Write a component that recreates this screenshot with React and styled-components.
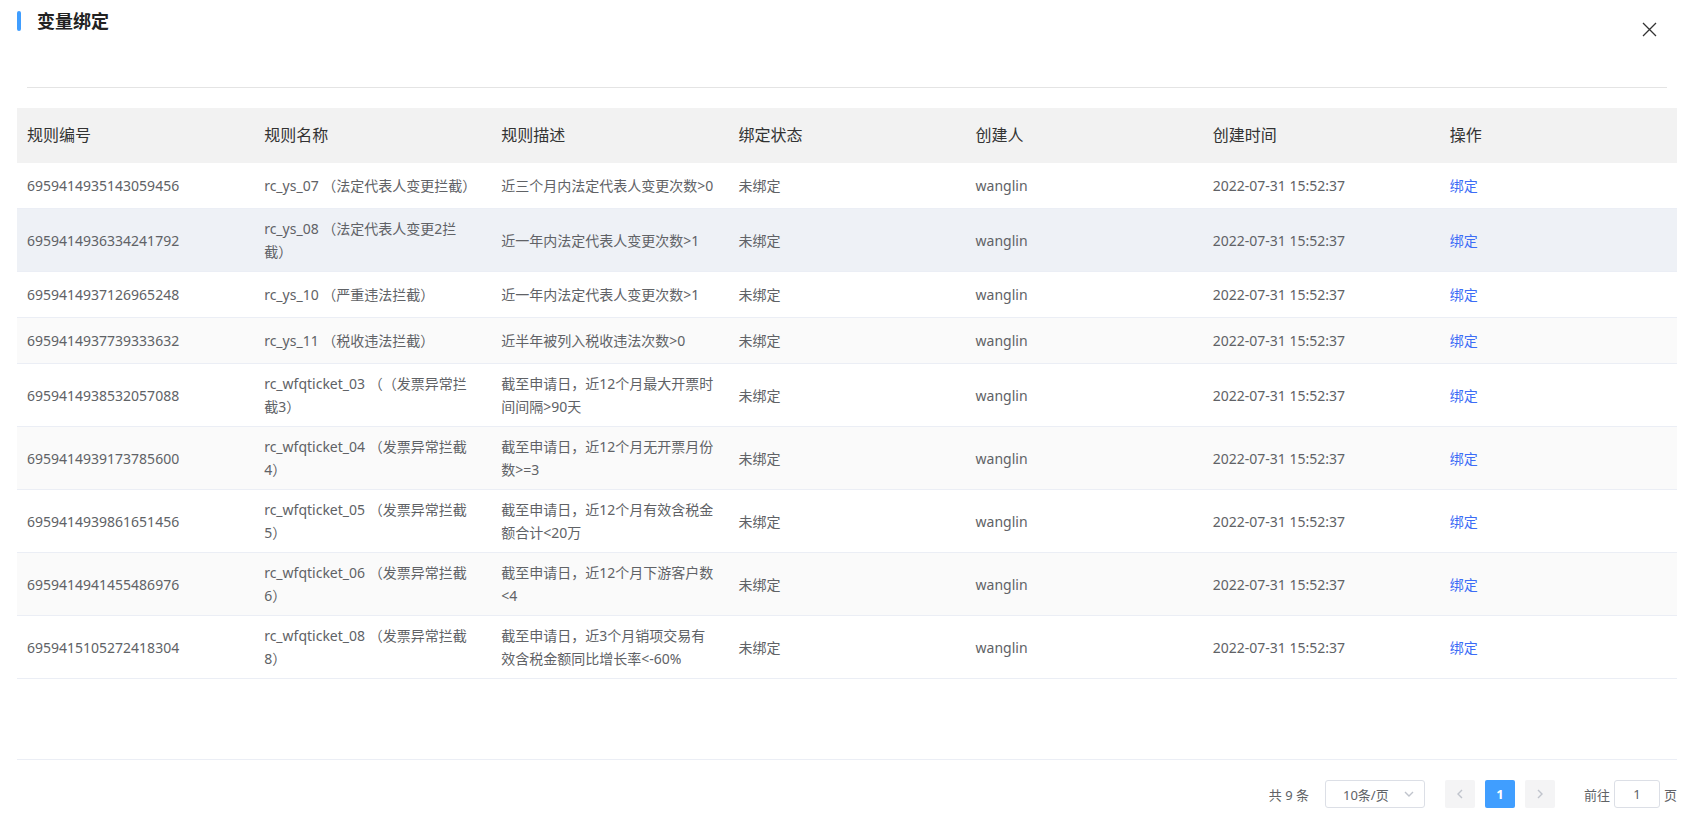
import React from 'react';
import styled, { createGlobalStyle } from 'styled-components';

const GlobalStyle = createGlobalStyle`
  html, body {
    margin: 0;
    padding: 0;
    background: #fff;
  }
  body {
    font-family: "Noto Sans", "Noto Sans CJK SC", sans-serif;
    color: #606266;
    text-spacing-trim: space-all;
  }
`;

const Page = styled.div`
  position: relative;
  height: 820px;
  padding: 11px 19px 0 17px;
  box-sizing: border-box;
  overflow: hidden;
`;

const Title = styled.h2`
  margin: 0;
  height: 20px;
  display: flex;
  align-items: center;
  gap: 16px;
  font-size: 18px;
  line-height: 20px;
  font-weight: 700;
  color: #222;

  &::before {
    content: '';
    width: 4px;
    height: 20px;
    border-radius: 2px;
    background: #409eff;
  }
`;

const CloseButton = styled.button`
  position: absolute;
  top: 21px;
  right: 38px;
  width: 17px;
  height: 17px;
  padding: 0;
  border: 0;
  background: transparent;
  cursor: pointer;
  display: flex;
  align-items: center;
  justify-content: center;
`;

const Divider = styled.div`
  margin: 56px 10px 20px;
  height: 1px;
  background: #e4e4e4;
`;

const Table = styled.div`
  height: 652px;
  box-sizing: border-box;
  border-bottom: 1px solid #ebeef5;
  display: flex;
  flex-direction: column;
`;

const Row = styled.div`
  display: grid;
  grid-template-columns: repeat(7, 1fr);
  min-height: 46px;
  box-sizing: border-box;
  border-bottom: 1px solid #ebeef5;
  background: ${(p) => (p.$hovered ? '#eef1f6' : p.$striped ? '#fafafa' : '#fff')};
`;

const HeadRow = styled(Row)`
  height: 55px;
  border-bottom: 0;
  background: #f2f2f2;
`;

const Cell = styled.div`
  display: flex;
  align-items: center;
  padding: 8px 12.5px 8px 10px;
  font-size: 14px;
  line-height: 23px;
  color: #606266;
  white-space: pre-line;
  text-spacing-trim: space-all;
  min-width: 0;
`;

const HeadCell = styled(Cell)`
  font-size: 16px;
  color: #333;
`;

const LinkButton = styled.a`
  font-size: 14px;
  color: #3c6cf6;
  cursor: pointer;
`;

const Pager = styled.div`
  margin-top: 20px;
  height: 28px;
  display: flex;
  align-items: center;
  justify-content: flex-end;
  font-size: 13px;
  color: #606266;
`;

const Total = styled.span`
  margin-right: 16px;
`;

const SizeSelect = styled.div`
  width: 100px;
  height: 28px;
  box-sizing: border-box;
  border: 1px solid #dcdfe6;
  border-radius: 3px;
  display: flex;
  align-items: center;
  padding: 0 10px 0 17px;
  margin-right: 20px;
  justify-content: space-between;
  color: #606266;
`;

const PageButton = styled.div`
  width: 30px;
  height: 28px;
  border-radius: 2px;
  display: flex;
  align-items: center;
  justify-content: center;
  margin-right: 10px;
  background: ${(p) => (p.$active ? '#409eff' : '#f4f4f5')};
  color: ${(p) => (p.$active ? '#fff' : '#c0c4cc')};
  font-weight: 700;
  font-size: 13px;
`;

const Jumper = styled.div`
  margin-left: 19px;
  display: flex;
  align-items: center;
  gap: 4px;
`;

const JumpInput = styled.div`
  width: 46px;
  height: 28px;
  box-sizing: border-box;
  border: 1px solid #dcdfe6;
  border-radius: 3px;
  display: flex;
  align-items: center;
  justify-content: center;
  color: #606266;
`;

const columns = ['规则编号', '规则名称', '规则描述', '绑定状态', '创建人', '创建时间', '操作'];

const rules = [
  { id: '6959414935143059456', name: 'rc_ys_07 （法定代表人变更拦截）', desc: '近三个月内法定代表人变更次数>0' },
  { id: '6959414936334241792', name: 'rc_ys_08 （法定代表人变更2拦\n截）', desc: '近一年内法定代表人变更次数>1' },
  { id: '6959414937126965248', name: 'rc_ys_10 （严重违法拦截）', desc: '近一年内法定代表人变更次数>1' },
  { id: '6959414937739333632', name: 'rc_ys_11 （税收违法拦截）', desc: '近半年被列入税收违法次数>0' },
  { id: '6959414938532057088', name: 'rc_wfqticket_03 （（发票异常拦\n截3）', desc: '截至申请日，近12个月最大开票时\n间间隔>90天' },
  { id: '6959414939173785600', name: 'rc_wfqticket_04 （发票异常拦截\n4）', desc: '截至申请日，近12个月无开票月份\n数>=3' },
  { id: '6959414939861651456', name: 'rc_wfqticket_05 （发票异常拦截\n5）', desc: '截至申请日，近12个月有效含税金\n额合计<20万' },
  { id: '6959414941455486976', name: 'rc_wfqticket_06 （发票异常拦截\n6）', desc: '截至申请日，近12个月下游客户数\n<4' },
  { id: '6959415105272418304', name: 'rc_wfqticket_08 （发票异常拦截\n8）', desc: '截至申请日，近3个月销项交易有\n效含税金额同比增长率<-60%' },
];

const Chevron = ({ dir }) => {
  const points = { left: '6,2 2,6 6,10', right: '2,2 6,6 2,10', down: '1,2 5,6 9,2' }[dir];
  return (
    <svg width={dir === 'down' ? 10 : 8} height={dir === 'down' ? 8 : 12} viewBox={dir === 'down' ? '0 0 10 8' : '0 0 8 12'}>
      <polyline points={points} fill="none" stroke="#c0c4cc" strokeWidth="1.4" />
    </svg>
  );
};

export default function App() {
  return (
    <>
      <GlobalStyle />
      <Page>
        <Title>变量绑定</Title>
        <CloseButton aria-label="关闭">
          <svg width="15" height="15" viewBox="0 0 15 15">
            <path d="M1 1 L14 14 M14 1 L1 14" stroke="#333" strokeWidth="1.3" fill="none" />
          </svg>
        </CloseButton>
        <Divider />
        <Table>
          <HeadRow>
            {columns.map((c) => (
              <HeadCell key={c}>{c}</HeadCell>
            ))}
          </HeadRow>
          {rules.map((r, i) => (
            <Row key={r.id} $striped={i % 2 === 1} $hovered={i === 1}>
              <Cell>{r.id}</Cell>
              <Cell>{r.name}</Cell>
              <Cell>{r.desc}</Cell>
              <Cell>未绑定</Cell>
              <Cell>wanglin</Cell>
              <Cell>2022-07-31 15:52:37</Cell>
              <Cell>
                <LinkButton>绑定</LinkButton>
              </Cell>
            </Row>
          ))}
        </Table>
        <Pager>
          <Total>共 9 条</Total>
          <SizeSelect>
            <span>10条/页</span>
            <Chevron dir="down" />
          </SizeSelect>
          <PageButton>
            <Chevron dir="left" />
          </PageButton>
          <PageButton $active>1</PageButton>
          <PageButton>
            <Chevron dir="right" />
          </PageButton>
          <Jumper>
            <span>前往</span>
            <JumpInput>1</JumpInput>
            <span>页</span>
          </Jumper>
        </Pager>
      </Page>
    </>
  );
}
